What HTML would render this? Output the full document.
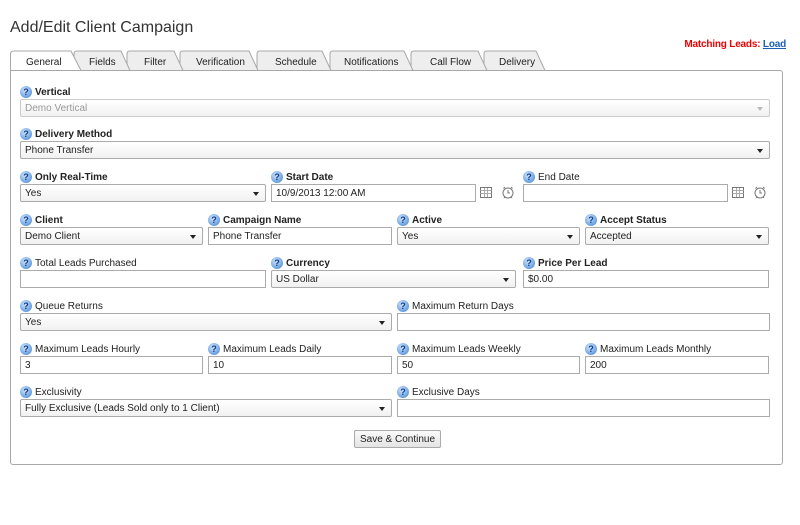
<!DOCTYPE html>
<html><head><meta charset="utf-8"><style>
*{box-sizing:border-box;margin:0;padding:0}
body{width:800px;height:525px;background:#fff;font-family:"Liberation Sans",sans-serif;font-size:10px;color:#222;position:relative;overflow:hidden}
.a{position:absolute}
.t{position:absolute;left:10px;top:19px;font-size:16px;color:#333}
.ml{position:absolute;right:14px;top:39px;font-size:10px;font-weight:bold;color:#e00;white-space:nowrap;letter-spacing:-0.2px}
.ml span{color:#1a5fb4;text-decoration:underline}
.panel{position:absolute;left:10px;top:70px;width:773px;height:395px;border:1px solid #a8a8a8;border-radius:0 3px 3px 3px}
.lb{position:absolute;height:13px;font-size:10px;line-height:13px;white-space:nowrap;color:#222}
.lb.b{font-weight:bold}
.lb i{display:inline-block;width:12px;height:12px;border-radius:50%;background:radial-gradient(circle at 40% 35%,#cfe6ff,#3a7fd0);color:#123a80;font-style:normal;font-weight:bold;font-size:9px;line-height:12px;text-align:center;vertical-align:top;margin-right:3px}
.f{position:absolute;height:18px;border:1px solid #ababab;background:#fff;font-size:10px;line-height:12px;padding:3px 0 0 4px;color:#222;white-space:nowrap}
.s{border-radius:2px;background:linear-gradient(#fff,#f1f1f1)}
.s:after{content:"";position:absolute;right:6px;top:7px;border-left:3.5px solid transparent;border-right:3.5px solid transparent;border-top:4px solid #222}
.dis{color:#999;border-color:#ccc}
.dis:after{border-top-color:#bbb}
.btn{position:absolute;left:354px;top:430px;width:87px;height:18px;border:1px solid #aaa;border-radius:2px;background:linear-gradient(#fafafa,#e4e4e4);font-size:10px;line-height:12px;padding-top:3px;text-align:center}
</style></head><body>
<div class="t">Add/Edit Client Campaign</div>
<div class="ml">Matching Leads: <span>Load</span></div>
<svg class="a" style="left:0;top:45px" width="560" height="27" font-family="Liberation Sans" font-size="10" fill="#222">
<g stroke="#a8a8a8" fill="#eeeeee">
<path d="M484 25.5V9Q484 6 487 6H536L545 25.5"/>
<path d="M411 25.5V9Q411 6 414 6H478L487 25.5"/>
<path d="M330 25.5V9Q330 6 333 6H404L413 25.5"/>
<path d="M257 25.5V9Q257 6 260 6H322L331 25.5"/>
<path d="M180 25.5V9Q180 6 183 6H249L258 25.5"/>
<path d="M127 25.5V9Q127 6 130 6H174L183 25.5"/>
<path d="M74 25.5V9Q74 6 77 6H121L130 25.5"/>
<path d="M10.5 26V9Q10.5 6 14 6H71L81 25.5" fill="#fff"/>
</g>
<line x1="81" y1="25.5" x2="545" y2="25.5" stroke="#a8a8a8"/>
<rect x="11" y="24" width="69" height="3" fill="#fff"/>
<g fill="#222">
<text x="26" y="20">General</text><text x="89" y="20">Fields</text><text x="144" y="20">Filter</text>
<text x="196" y="20">Verification</text><text x="275" y="20">Schedule</text><text x="344" y="20">Notifications</text>
<text x="430" y="20">Call Flow</text><text x="499" y="20">Delivery</text></g>
</svg>
<div class="panel"></div>

<div class="lb b" style="left:20px;top:86px"><i>?</i>Vertical</div>
<div class="f s dis" style="left:20px;top:99px;width:750px">Demo Vertical</div>

<div class="lb b" style="left:20px;top:128px"><i>?</i>Delivery Method</div>
<div class="f s" style="left:20px;top:141px;width:750px">Phone Transfer</div>

<div class="lb b" style="left:20px;top:171px"><i>?</i>Only Real-Time</div>
<div class="f s" style="left:20px;top:184px;width:246px">Yes</div>
<div class="lb b" style="left:271px;top:171px"><i>?</i>Start Date</div>
<div class="f" style="left:271px;top:184px;width:205px">10/9/2013 12:00 AM</div>
<div class="lb" style="left:523px;top:171px"><i>?</i>End Date</div>
<div class="f" style="left:523px;top:184px;width:205px"></div>
<svg class="a" style="left:480px;top:185px" width="40" height="16"><g stroke="#777" fill="none"><rect x="0.5" y="2.5" width="11" height="10"/><path d="M0.5 5.5H11.5M0.5 8.5H11.5M4.5 3V12M7.5 3V12" stroke="#aaa"/><circle cx="28" cy="8" r="5"/><path d="M28 5V8H30M23.5 3.5L25 2M32.5 3.5L31 2M24 13L25 12M32 13L31 12"/></g></svg>
<svg class="a" style="left:732px;top:185px" width="40" height="16"><g stroke="#777" fill="none"><rect x="0.5" y="2.5" width="11" height="10"/><path d="M0.5 5.5H11.5M0.5 8.5H11.5M4.5 3V12M7.5 3V12" stroke="#aaa"/><circle cx="28" cy="8" r="5"/><path d="M28 5V8H30M23.5 3.5L25 2M32.5 3.5L31 2M24 13L25 12M32 13L31 12"/></g></svg>

<div class="lb b" style="left:20px;top:214px"><i>?</i>Client</div>
<div class="f s" style="left:20px;top:227px;width:183px">Demo Client</div>
<div class="lb b" style="left:208px;top:214px"><i>?</i>Campaign Name</div>
<div class="f" style="left:208px;top:227px;width:184px">Phone Transfer</div>
<div class="lb b" style="left:397px;top:214px"><i>?</i>Active</div>
<div class="f s" style="left:397px;top:227px;width:183px">Yes</div>
<div class="lb b" style="left:585px;top:214px"><i>?</i>Accept Status</div>
<div class="f s" style="left:585px;top:227px;width:184px">Accepted</div>

<div class="lb" style="left:20px;top:257px"><i>?</i>Total Leads Purchased</div>
<div class="f" style="left:20px;top:270px;width:246px"></div>
<div class="lb b" style="left:271px;top:257px"><i>?</i>Currency</div>
<div class="f s" style="left:271px;top:270px;width:245px">US Dollar</div>
<div class="lb b" style="left:523px;top:257px"><i>?</i>Price Per Lead</div>
<div class="f" style="left:523px;top:270px;width:246px">$0.00</div>

<div class="lb" style="left:20px;top:300px"><i>?</i>Queue Returns</div>
<div class="f s" style="left:20px;top:313px;width:372px">Yes</div>
<div class="lb" style="left:397px;top:300px"><i>?</i>Maximum Return Days</div>
<div class="f" style="left:397px;top:313px;width:373px"></div>

<div class="lb" style="left:20px;top:343px"><i>?</i>Maximum Leads Hourly</div>
<div class="f" style="left:20px;top:356px;width:183px">3</div>
<div class="lb" style="left:208px;top:343px"><i>?</i>Maximum Leads Daily</div>
<div class="f" style="left:208px;top:356px;width:184px">10</div>
<div class="lb" style="left:397px;top:343px"><i>?</i>Maximum Leads Weekly</div>
<div class="f" style="left:397px;top:356px;width:183px">50</div>
<div class="lb" style="left:585px;top:343px"><i>?</i>Maximum Leads Monthly</div>
<div class="f" style="left:585px;top:356px;width:184px">200</div>

<div class="lb" style="left:20px;top:386px"><i>?</i>Exclusivity</div>
<div class="f s" style="left:20px;top:399px;width:372px">Fully Exclusive (Leads Sold only to 1 Client)</div>
<div class="lb" style="left:397px;top:386px"><i>?</i>Exclusive Days</div>
<div class="f" style="left:397px;top:399px;width:373px"></div>

<div class="btn">Save &amp; Continue</div>
</body></html>
